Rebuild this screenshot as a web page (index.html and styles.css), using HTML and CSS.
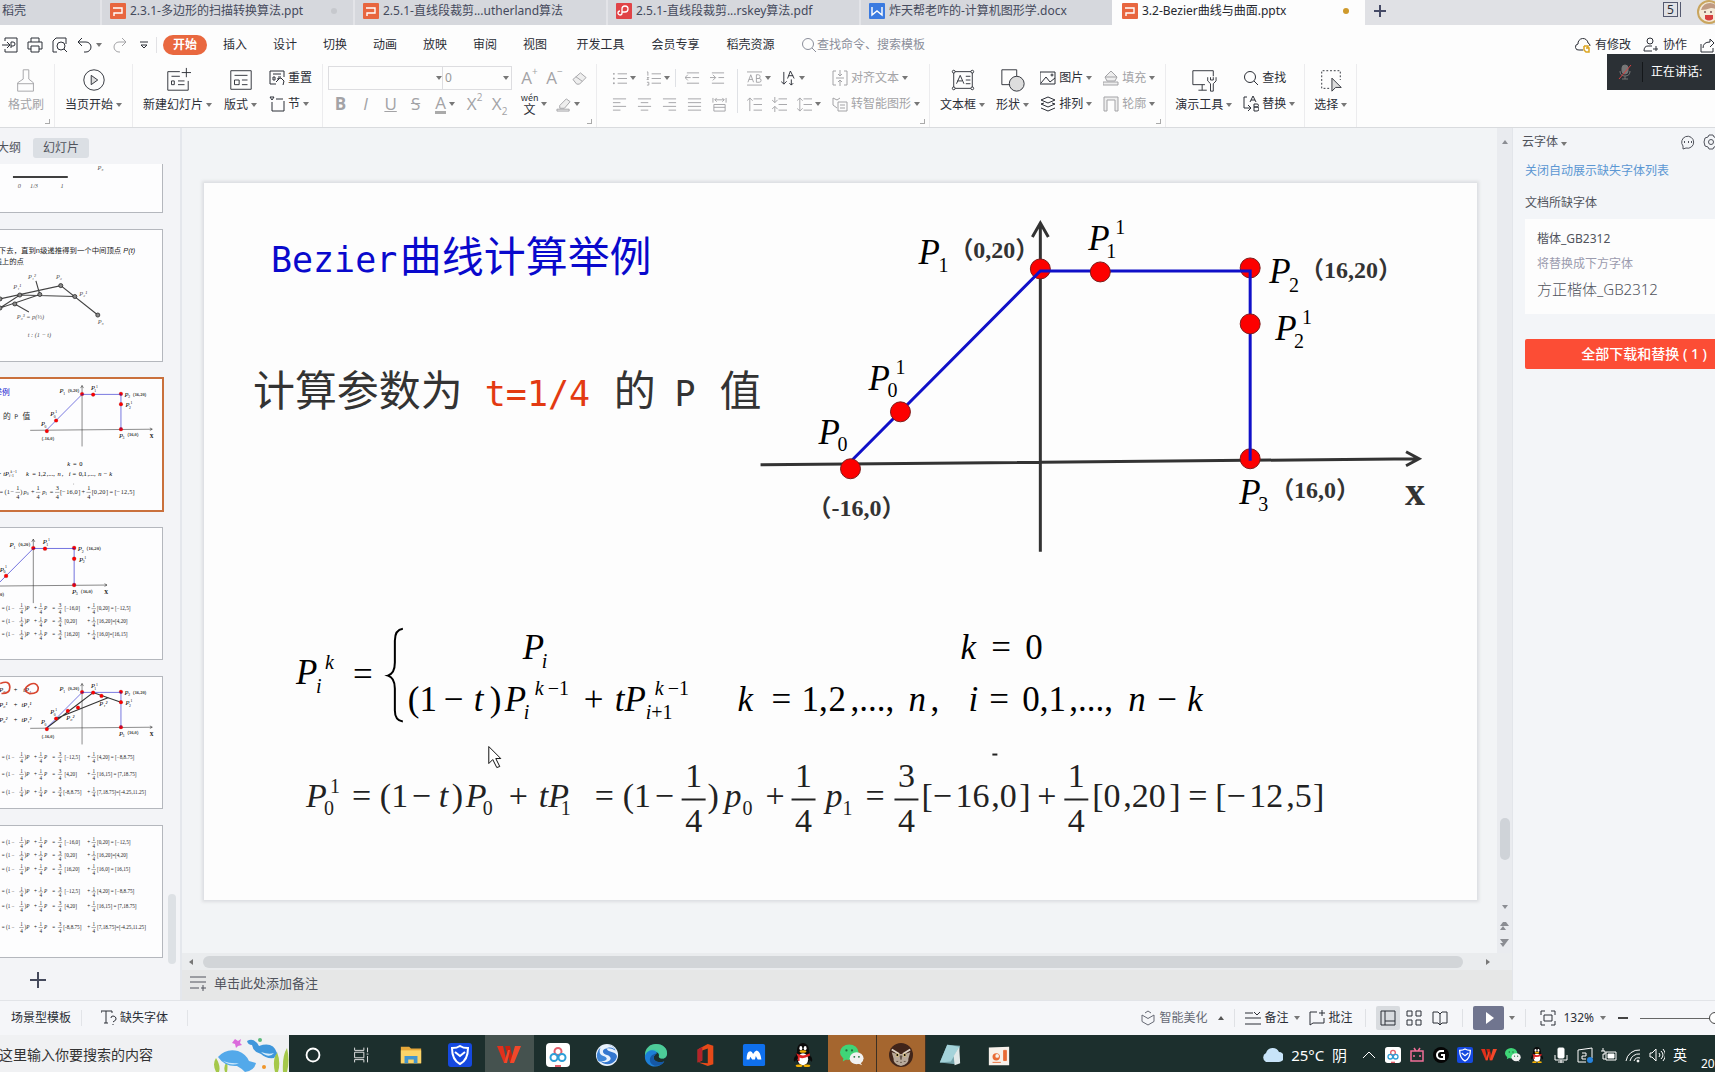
FILE: index.html
```html
<!DOCTYPE html>
<html lang="zh-CN">
<head>
  <meta charset="UTF-8" />
  <meta name="viewport" content="width=device-width, initial-scale=1.0"/>
  <title>3.2-Bezier曲线与曲面.pptx</title>
  <link rel="stylesheet" href="styles.css">
</head>
<body>
  <!-- Shared drawings -->
  <svg class="sprite" aria-hidden="true">
    <defs>
      <symbol id="ppt" viewBox="0 0 16 16"><rect width="16" height="16" rx="1" fill="#e8663f"/><path d="M3 5h9v5H4v3" fill="none" stroke="#fff" stroke-width="1.4"/></symbol>
      <symbol id="pdf" viewBox="0 0 16 16"><rect width="16" height="16" rx="1" fill="#e04347"/><path d="M6 9h3a3 3 0 1 0-3-3v4a2 2 0 1 1-2-2" fill="none" stroke="#fff" stroke-width="1.3"/></symbol>
      <symbol id="doc" viewBox="0 0 16 16"><rect width="16" height="16" rx="1" fill="#3a7ae0"/><path d="M3 4v8l5-4 5 4V4" fill="none" stroke="#fff" stroke-width="1.4"/></symbol>
      <symbol id="wechat" viewBox="0 0 26 24"><ellipse cx="10" cy="9" rx="10" ry="8.500" fill="#3fd577"/><path d="M4 14l-1 5 5-3z" fill="#3fd577"/><ellipse cx="18" cy="15.500" rx="7.500" ry="6.500" fill="#f1f1f1"/><path d="M22 20l2 3-5-2z" fill="#f1f1f1"/><g fill="#1f6e3c"><circle cx="7" cy="7" r="1.200"/><circle cx="13" cy="7" r="1.200"/><circle cx="15.500" cy="14" r="1"/><circle cx="20.500" cy="14" r="1"/></g></symbol>
      <symbol id="qq" viewBox="0 0 24 28"><path d="M3 15q-3 5-1 7l3-3zM21 15q3 5 1 7l-3-3z" fill="#0b0b0b"/><ellipse cx="12" cy="16" rx="8.500" ry="10" fill="#0b0b0b"/><ellipse cx="12" cy="8" rx="7" ry="8" fill="#0b0b0b"/><ellipse cx="12" cy="19" rx="6" ry="7" fill="#fff"/><ellipse cx="9.500" cy="6" rx="1.700" ry="2.400" fill="#fff"/><ellipse cx="14.500" cy="6" rx="1.700" ry="2.400" fill="#fff"/><ellipse cx="12" cy="10" rx="4" ry="1.500" fill="#f4b000"/><path d="M4 12q8 5 16 0v3q-8 4-12 2v4H6v-5z" fill="#e02424"/><ellipse cx="7.500" cy="26.500" rx="4" ry="1.500" fill="#f4b000"/><ellipse cx="16.500" cy="26.500" rx="4" ry="1.500" fill="#f4b000"/></symbol>
      <symbol id="disk" viewBox="0 0 24 24"><rect width="24" height="24" rx="4" fill="#fff"/><g fill="none" stroke-width="2"><circle cx="12" cy="8.500" r="3.500" stroke="#e35f6c"/><circle cx="8" cy="14.500" r="3.500" stroke="#2e9fd8"/><circle cx="16" cy="14.500" r="3.500" stroke="#2e9fd8"/></g><path d="M9 23h6" stroke="#e35f6c" stroke-width="2"/></symbol>
      <symbol id="shield" viewBox="0 0 24 24"><rect width="24" height="24" rx="3" fill="#1549e0"/><path d="M12 3c3 2 5 2 8 2 0 8-2 13-8 16C6 18 4 13 4 5c3 0 5 0 8-2z" fill="none" stroke="#fff" stroke-width="2"/><path d="M7 9l5 4 5-4" fill="none" stroke="#fff" stroke-width="2"/></symbol>
      <symbol id="wps" viewBox="0 0 24 20"><path d="M0 1h6l4 17H7z" fill="#e2301c"/><path d="M8 1h5l4 17h-4z" fill="#c9210f"/><path d="M13 5l-3 13H7l4-13zM24 1l-7 17h-4l5-17z" fill="#f1482b"/></symbol>
      <symbol id="cube" viewBox="0 0 16 16"><path d="M2 5v6.500l6 3.500 6-3.500V5M2 5l6 3.500L14 5M5 3l3-2 3 2"/></symbol>
      <symbol id="magnifier" viewBox="0 0 16 16"><circle cx="7" cy="7" r="5.500"/><path d="M11 11l4 4"/></symbol>

      <!-- coordinate system with the control polygon -->
      <g id="diagram">
        <path class="axis" d="M837 369V40M829 54l8-14 8 14M557 282L1216 276M1203 269l13 7-13 7"/>
        <g class="dot"><circle cx="837" cy="86" r="10"/><circle cx="1047" cy="85" r="10"/><circle cx="1047" cy="276" r="10"/></g>
        <path class="polygon" d="M647 279L837 88H1047V278"/>
        <g class="dot"><circle cx="897" cy="89" r="10"/><circle cx="1047" cy="141" r="10"/><circle cx="697" cy="229" r="10"/><circle cx="647" cy="286" r="10"/></g>
        <g class="math">
          <text x="715" y="81"><tspan class="v">P</tspan><tspan class="s" x="735" y="89">1</tspan></text>
          <text x="885" y="67"><tspan class="v">P</tspan><tspan class="s" x="912" y="51">1</tspan><tspan class="s" x="903" y="75">1</tspan></text>
          <text x="1066" y="100"><tspan class="v">P</tspan><tspan class="s" x="1086" y="109">2</tspan></text>
          <text x="1072" y="157"><tspan class="v">P</tspan><tspan class="s" x="1099" y="141">1</tspan><tspan class="s" x="1091" y="165">2</tspan></text>
          <text x="665" y="207"><tspan class="v">P</tspan><tspan class="s" x="692" y="191">1</tspan><tspan class="s" x="684" y="214">0</tspan></text>
          <text x="615" y="261"><tspan class="v">P</tspan><tspan class="s" x="634" y="268">0</tspan></text>
          <text x="1036" y="321"><tspan class="v">P</tspan><tspan class="s" x="1055" y="328">3</tspan></text>
        </g>
        <g class="coords">
          <text x="746" y="75">（0,20）</text>
          <text x="1097" y="95">（16,20）</text>
          <text x="604" y="333">（-16,0）</text>
          <text x="1067" y="315">（16,0）</text>
          <text class="axis-name" x="1202" y="322">x</text>
        </g>
      </g>

      <g id="quarter" class="frac"><text x="0" y="-21">1</text><text x="0" y="25">4</text><path d="M-12-8h24"/></g>
      <g id="three-quarters" class="frac"><text x="0" y="-21">3</text><text x="0" y="25">4</text><path d="M-12-8h24"/></g>
      <g id="small-quarter" class="frac"><text x="0" y="-15">1</text><text x="0" y="19">4</text><path d="M-12-9h24"/></g>
      <g id="small-three-quarters" class="frac"><text x="0" y="-15">3</text><text x="0" y="19">4</text><path d="M-12-9h24"/></g>

      <!-- the part that every step of the recursion repeats -->
      <g id="step">
        <text x="404" y="0">= (1 −</text><use href="#small-quarter" x="510"/><text x="526" y="0">)<tspan class="v">P</tspan></text>
        <text x="577" y="0">+</text><use href="#small-quarter" x="614"/><text x="632" y="0"><tspan class="v">P</tspan></text>
        <text x="676" y="0">=</text><use href="#small-three-quarters" x="718"/><text x="865" y="0">+</text><use href="#small-quarter" x="900"/>
      </g>

      <g id="slide">
        <text class="hei title" x="67" y="89"><tspan class="latin">Bezier</tspan><tspan x="196">曲线计算举例</tspan></text>
        <text class="hei" x="49" y="223">计算参数为<tspan class="latin red" x="281">t=1/4</tspan><tspan x="410">的</tspan><tspan class="latin" x="471">P</tspan><tspan x="516">值</tspan></text>
        <use href="#diagram"/>
        <g class="math">
          <text x="92" y="501"><tspan class="v">P</tspan><tspan class="s v" x="121" y="486">k</tspan><tspan class="s v" x="112" y="510">i</tspan><tspan x="149" y="503">=</tspan></text>
          <path class="brace" d="M199 446q-8 1-8 12v22q0 11-7 13q7 2 7 13v22q0 10 8 11"/>
          <text x="319" y="476"><tspan class="v">P</tspan><tspan class="s v" x="338" y="485">i</tspan></text>
          <text x="757" y="476"><tspan class="v">k</tspan><tspan x="788">=</tspan><tspan x="822">0</tspan></text>
          <text x="204" y="528">(1<tspan x="240">−</tspan><tspan class="v" x="270">t</tspan><tspan x="286">)</tspan><tspan class="v" x="301">P</tspan><tspan class="s v" x="331" y="512">k</tspan><tspan class="s" x="344">−1</tspan><tspan class="s v" x="320" y="536">i</tspan></text>
          <text x="380" y="528">+<tspan class="v" x="411">tP</tspan><tspan class="s v" x="451" y="512">k</tspan><tspan class="s" x="464">−1</tspan><tspan class="s v" x="442" y="536">i</tspan><tspan class="s">+1</tspan></text>
          <text x="534" y="528"><tspan class="v">k</tspan><tspan x="568">=</tspan><tspan x="598">1,</tspan><tspan x="625">2</tspan><tspan x="647">,...,</tspan><tspan class="v" x="705">n</tspan><tspan x="727">,</tspan><tspan class="v" x="765">i</tspan><tspan x="786">=</tspan><tspan x="819">0,1</tspan><tspan x="866">,...,</tspan><tspan class="v" x="925">n</tspan><tspan x="954">−</tspan><tspan class="v" x="984">k</tspan></text>
        </g>
        <g class="result">
          <text x="102" y="625"><tspan class="v">P</tspan><tspan class="s" x="126" y="611">1</tspan><tspan class="s" x="120" y="633">0</tspan><tspan x="148" y="625">=</tspan><tspan x="176">(1</tspan><tspan x="208">−</tspan><tspan class="v" x="235">t</tspan><tspan x="248">)</tspan><tspan class="v" x="262">P</tspan><tspan class="s" x="279" y="633">0</tspan><tspan x="305" y="625">+</tspan><tspan class="v" x="335">tP</tspan><tspan class="s" x="357" y="633">1</tspan></text>
          <text x="391" y="625">=<tspan x="419">(1</tspan><tspan x="451">−</tspan><tspan x="504">)</tspan><tspan class="v" x="521">p</tspan><tspan class="s" x="539" y="633">0</tspan><tspan x="562" y="625">+</tspan><tspan class="v" x="622">p</tspan><tspan class="s" x="639" y="633">1</tspan><tspan x="662" y="625">=</tspan></text>
          <use href="#quarter" x="490" y="625"/><use href="#quarter" x="600" y="625"/><use href="#three-quarters" x="703" y="625"/><use href="#quarter" x="873" y="625"/>
          <text x="718" y="625">[−<tspan x="752">16</tspan><tspan x="788">,0</tspan><tspan x="816">]</tspan><tspan x="834">+</tspan><tspan x="889">[0</tspan><tspan x="920">,20</tspan><tspan x="966">]</tspan><tspan x="985">=</tspan><tspan x="1012">[−</tspan><tspan x="1046">12</tspan><tspan x="1083">,5</tspan><tspan x="1110">]</tspan></text>
          <path class="speck" d="M789 572h5"/>
        </g>
      </g>
    </defs>
  </svg>

  <header class="tabbar">
    <button class="tab tab-home">稻壳</button>
    <button class="tab"><svg class="file"><use href="#ppt"/></svg>2.3.1-多边形的扫描转换算法.ppt<i class="unsaved"></i></button>
    <button class="tab"><svg class="file"><use href="#ppt"/></svg>2.5.1-直线段裁剪...utherland算法</button>
    <button class="tab"><svg class="file"><use href="#pdf"/></svg>2.5.1-直线段裁剪...rskey算法.pdf</button>
    <button class="tab"><svg class="file"><use href="#doc"/></svg>炸天帮老咋的-计算机图形学.docx</button>
    <button class="tab active"><svg class="file"><use href="#ppt"/></svg>3.2-Bezier曲线与曲面.pptx<i class="unsaved"></i></button>
    <button class="new-tab" aria-label="新建"><svg class="icon" viewBox="0 0 16 16"><path d="M8 2v12M2 8h12" stroke-width="2"/></svg></button>
    <span class="count">5</span>
    <svg class="avatar" viewBox="0 0 24 24"><circle cx="12" cy="12" r="11" fill="#f4ead8" stroke="#c9a55e" stroke-width="2"/><path d="M4 10q2-7 9-7t8 8q-3-3-7-3-5 2-10 2z" fill="#c09b83"/><circle cx="8" cy="12" r="1" fill="#755"/><circle cx="14" cy="12" r="1" fill="#755"/><path d="M8 15h8v4q-4 3-8 0z" fill="#d84040"/></svg>
  </header>

  <nav class="menu">
    <div class="quick">
      <button aria-label="输出为PDF"><svg class="icon" viewBox="0 0 16 16"><path d="M3 4V1h12v14H3v-3M0 8h7M5 5l3 3-3 3M9 11V5h2a2 2 0 0 1 0 4H9"/></svg></button>
      <button aria-label="打印"><svg class="icon" viewBox="0 0 16 16"><path d="M4 5V1h8v4M4 12H1V5h14v7h-3M4 9h8v6H4z"/></svg></button>
      <button aria-label="打印预览"><svg class="icon" viewBox="0 0 16 16"><path d="M5 15H1V4l3-3h10v6"/><circle cx="9" cy="9" r="4"/><path d="M12 12l3 3"/></svg></button>
      <button class="drop" aria-label="撤销"><svg class="icon" viewBox="0 0 16 16"><path d="M5 1L1 5l4 4M1 5h8a5 5 0 0 1 0 10H7"/></svg><i class="caret"></i></button>
      <button class="dim redo" aria-label="恢复"><svg class="icon" viewBox="0 0 16 16"><path d="M11 1l4 4-4 4M15 5H8a5 5 0 0 0 0 10h1"/></svg></button>
      <button aria-label="自定义"><svg class="icon" viewBox="0 0 16 16"><path d="M4 5h8M5 8l3 3 3-3z"/></svg></button>
    </div>
    <button class="menu-item current">开始</button>
    <button class="menu-item">插入</button>
    <button class="menu-item">设计</button>
    <button class="menu-item">切换</button>
    <button class="menu-item">动画</button>
    <button class="menu-item">放映</button>
    <button class="menu-item">审阅</button>
    <button class="menu-item">视图</button>
    <button class="menu-item wide">开发工具</button>
    <button class="menu-item wide">会员专享</button>
    <button class="menu-item wide">稻壳资源</button>
    <label class="search"><svg class="icon"><use href="#magnifier"/></svg><input type="text" placeholder="查找命令、搜索模板"></label>
    <div class="account">
      <button><svg class="icon" viewBox="0 0 16 16"><path d="M8 13H4a3 3 0 0 1-1-6 5 5 0 0 1 10-1 3 3 0 0 1 2 3"/><path d="M9 9h4v2M9 9v4l2 2h3v-4h-3" stroke="#dba520" stroke-width="1.500"/></svg>有修改</button>
      <button><svg class="icon" viewBox="0 0 16 16"><circle cx="7" cy="4" r="3"/><path d="M9 9H5q-4 0-4 5h8M10 12h5M13 9v5"/></svg>协作</button>
      <button aria-label="分享"><svg class="icon" viewBox="0 0 16 16"><path d="M2 7v8h12v-4M4 11q0-6 7-6V2l4 4-4 4"/></svg></button>
    </div>
  </nav>

  <div class="ribbon">
    <div class="group first">
      <button class="big dim"><svg class="icon" viewBox="0 0 28 28"><path d="M11 3h6v10l5 4v9H5v-9l6-4zM5 18h17"/></svg><span>格式刷</span></button>
      <i class="corner"></i>
    </div>
    <div class="group">
      <button class="big"><svg class="icon" viewBox="0 0 28 28"><circle cx="14" cy="14" r="11"/><path d="M11 9v10l7-5z" fill="#ddd"/></svg><span>当页开始<i class="caret"></i></span></button>
    </div>
    <div class="group">
      <button class="big"><svg class="icon" viewBox="0 0 28 28"><path d="M16 5H3v20h22V15M23 1v10M18 6h10M7 10h9M7 15h3v4H7zM14 15h7M14 19h7"/></svg><span>新建幻灯片<i class="caret"></i></span></button>
      <button class="big"><svg class="icon" viewBox="0 0 28 28"><path d="M3 4h22v20H3zM7 9h14M7 14h5v5H7zM15 14h6M15 19h6"/></svg><span>版式<i class="caret"></i></span></button>
      <div class="stack">
        <button class="small"><svg class="icon" viewBox="0 0 16 16"><path d="M7 14H1V1h14v6M4 4h8M4 7h2v3H4zM9 7h3M7 12l3-3M8 9l4-1 3 3-1 4"/></svg>重置</button>
        <button class="small"><svg class="icon" viewBox="0 0 16 16"><path d="M1 1h4L3 4zM7 3h7M3 6v9h12V5"/></svg>节<i class="caret"></i></button>
      </div>
    </div>
    <div class="group font-group">
      <div class="row">
        <div class="fields"><label><select class="font-name" aria-label="字体"><option></option></select><i class="caret"></i></label><label><select class="font-size" aria-label="字号"><option>0</option></select><i class="caret"></i></label></div>
        <button class="tool dim">A<sup>+</sup></button>
        <button class="tool dim">A<sup>−</sup></button>
        <button class="tool dim" aria-label="清除格式"><svg class="icon" viewBox="0 0 16 16"><path d="M1 9l8-7 6 5-7 7H5zM4 6l7 5" fill="#eee"/></svg></button>
      </div>
      <div class="row">
        <button class="tool dim"><b>B</b></button>
        <button class="tool dim"><em>I</em></button>
        <button class="tool dim"><u>U</u></button>
        <button class="tool dim"><s>S</s></button>
        <button class="tool dim drop"><span class="colored">A</span><i class="caret"></i></button>
        <button class="tool dim">X<sup>2</sup></button>
        <button class="tool dim">X<sub>2</sub></button>
        <button class="tool drop pinyin"><span><small>wén</small>文</span><i class="caret"></i></button>
        <button class="tool dim drop" aria-label="突出显示"><svg class="icon" viewBox="0 0 16 16"><path d="M4 9l7-7 4 3-6 7H4zM1 13h13v2H1z" fill="#eee"/></svg><i class="caret"></i></button>
      </div>
      <i class="corner"></i>
    </div>
    <div class="group para-group">
      <div class="stack">
        <div class="row">
          <button class="tool dim drop" aria-label="项目符号"><svg class="icon" viewBox="0 0 16 16"><path d="M6 3h10M6 8h10M6 13h10"/><g fill="currentColor" stroke="none"><circle cx="2" cy="3" r="1"/><circle cx="2" cy="8" r="1"/><circle cx="2" cy="13" r="1"/></g></svg><i class="caret"></i></button>
          <button class="tool dim drop" aria-label="编号"><svg class="icon" viewBox="0 0 16 16"><path d="M6 3h10M6 8h10M6 13h10M1 1h1v4M1 7h2l-2 2h2M1 12h2v3H1"/></svg><i class="caret"></i></button>
          <i class="rule"></i>
          <button class="tool dim" aria-label="减少缩进"><svg class="icon" viewBox="0 0 16 16"><path d="M2 2h13M8 7h7M2 13h13M6 7H0M3 4L0 7l3 3"/></svg></button>
          <button class="tool dim" aria-label="增加缩进"><svg class="icon" viewBox="0 0 16 16"><path d="M2 2h13M9 7h6M2 13h13M0 7h6M3 4l3 3-3 3"/></svg></button>
        </div>
        <div class="row">
          <button class="tool dim" aria-label="左对齐"><svg class="icon" viewBox="0 0 16 16"><path d="M1 2h14M1 6h8M1 10h14M1 14h8"/></svg></button>
          <button class="tool dim" aria-label="居中"><svg class="icon" viewBox="0 0 16 16"><path d="M1 2h14M4 6h8M1 10h14M4 14h8"/></svg></button>
          <button class="tool dim" aria-label="右对齐"><svg class="icon" viewBox="0 0 16 16"><path d="M1 2h14M7 6h8M1 10h14M7 14h8"/></svg></button>
          <button class="tool dim" aria-label="两端对齐"><svg class="icon" viewBox="0 0 16 16"><path d="M1 2h14M1 6h14M1 10h14M1 14h14"/></svg></button>
          <button class="tool dim" aria-label="分散对齐"><svg class="icon" viewBox="0 0 16 16"><path d="M1 1v5M15 1v5M3 3h10M5 1L3 3l2 2M11 1l2 2-2 2M2 8h12v7H2zM2 11h12"/></svg></button>
        </div>
      </div>
      <i class="rule tall"></i>
      <div class="stack">
        <div class="row">
          <button class="tool dim drop" aria-label="文字方向"><svg class="icon" viewBox="0 0 16 16"><path d="M0 1h16M0 15h16M1 12l3-8 3 8M2 9h4M10 4v8h3a2 2 0 0 0 0-4h-3 2a2 2 0 0 0 0-4z"/></svg><i class="caret"></i></button>
          <button class="tool drop" aria-label="文字排列"><svg class="icon" viewBox="0 0 16 16"><path d="M3 1v13M0 11l3 3 3-3M7 8l3-8 4 8M8 5h5M11 9v6M9 13l2 2 2-2"/></svg><i class="caret"></i></button>
        </div>
        <div class="row">
          <button class="tool dim" aria-label="增大行距"><svg class="icon" viewBox="0 0 16 16"><path d="M7 2h9M7 8h9M7 14h9M3 1v14M0 4l3-3 3 3"/></svg></button>
          <button class="tool dim" aria-label="减小行距"><svg class="icon" viewBox="0 0 16 16"><path d="M7 2h9M7 8h9M7 14h9M3 0v6M3 10v6M0 3l3 3 3-3M0 13l3-3 3 3"/></svg></button>
          <button class="tool dim drop" aria-label="行距"><svg class="icon" viewBox="0 0 16 16"><path d="M7 2h9M7 8h9M7 14h9M3 1v14M0 4l3-3 3 3M0 12l3 3 3-3"/></svg><i class="caret"></i></button>
        </div>
      </div>
      <div class="stack text-stack">
        <button class="small dim"><svg class="icon" viewBox="0 0 16 16"><path d="M4 1H1v14h3M12 1h3v14h-3M4 8h8M8 0v6M6 4l2 2 2-2M8 16v-6M6 12l2-2 2 2"/></svg>对齐文本<i class="caret"></i></button>
        <button class="small dim"><svg class="icon" viewBox="0 0 16 16"><path d="M5 12L1 9V2l4 2 3-2M6 6h9v9H6zM8 9h5M8 12h5"/></svg>转智能图形<i class="caret"></i></button>
      </div>
      <i class="corner"></i>
    </div>
    <div class="group draw-group">
      <button class="big"><svg class="icon" viewBox="0 0 28 28"><path d="M4 5h20v18H4zM7 18l4-9 4 9M8 15h5M17 10h5M17 14h5M17 18h5"/><g fill="#fff"><circle cx="4" cy="5" r="1.500"/><circle cx="24" cy="5" r="1.500"/><circle cx="4" cy="23" r="1.500"/><circle cx="24" cy="23" r="1.500"/></g></svg><span>文本框<i class="caret"></i></span></button>
      <button class="big"><svg class="icon" viewBox="0 0 28 28"><path d="M2 3h16v16H2z"/><circle cx="18" cy="18" r="8" fill="#ddd"/></svg><span>形状<i class="caret"></i></span></button>
      <div class="stack">
        <button class="small"><svg class="icon" viewBox="0 0 16 16"><path d="M0 2h15v12H0zM1 13l5-6 4 5 5-4"/><circle cx="12" cy="5" r="1"/></svg>图片<i class="caret"></i></button>
        <button class="small"><svg class="icon" viewBox="0 0 16 16"><path d="M8 1l7 3-7 3-7-3zM1 8l7 3 7-3M1 12l7 3 7-3M1 8l3-1M15 8l-3-1"/></svg>排列<i class="caret"></i></button>
      </div>
      <div class="stack">
        <button class="small dim"><svg class="icon" viewBox="0 0 16 16"><path d="M2 7l6-6 6 6-2 4H4zM2 7h12M0 12h15v3H0z" fill="#eee"/></svg>填充<i class="caret"></i></button>
        <button class="small dim"><svg class="icon" viewBox="0 0 16 16"><path d="M1 15V1h14v14h-3V4H4v11z" fill="#eee"/></svg>轮廓<i class="caret"></i></button>
      </div>
      <i class="corner"></i>
    </div>
    <div class="group tight">
      <button class="big"><svg class="icon" viewBox="0 0 28 28"><path d="M15 19H2V4h22v6M8 25h9M12 19v6M18 11v4l3 3v8h3v-8l3-3v-4M21 11v3h3v-3"/></svg><span>演示工具<i class="caret"></i></span></button>
      <div class="stack">
        <button class="small"><svg class="icon"><use href="#magnifier"/></svg>查找</button>
        <button class="small"><svg class="icon" viewBox="0 0 16 16"><path d="M4 1H1v11h6M5 9l3 3-3 3M7 6l3-6 3 6M8 4h4M11 8v7h3a2 2 0 0 0 0-4h-3 3a1 1 0 0 0 0-3z"/></svg>替换<i class="caret"></i></button>
      </div>
    </div>
    <div class="group tight">
      <button class="big"><svg class="icon" viewBox="0 0 28 28"><path d="M12 23H4V4h20v10" stroke-dasharray="2 2"/><path d="M15 12v14l4-4h6z" fill="#ddd"/></svg><span>选择<i class="caret"></i></span></button>
    </div>
  </div>

  <div class="speaking">
    <svg class="icon" viewBox="0 0 16 16"><rect x="5" y="1" width="6" height="9" rx="3" fill="#777" stroke="#777"/><path d="M3 7q0 5 5 5t5-5M8 12v3M5 15h6" stroke="#777"/><path d="M2 15L14 1" stroke="#d54040"/></svg>
    <span>正在讲话:</span>
  </div>

  <main class="workspace">
    <aside class="outline">
      <div class="outline-tabs"><button>大纲</button><button class="on">幻灯片</button></div>
      <div class="thumbs">
        <svg class="thumb" viewBox="0 0 1274 717">
          <path d="M464 523h296" stroke="#000" stroke-width="8"/>
          <g class="note"><text x="490" y="580">0</text><text x="556" y="580">1/3</text><text x="720" y="580">1</text><text x="920" y="486">P₃</text></g>
        </svg>
        <svg class="thumb" viewBox="0 0 1274 717">
          <g class="lead"><text x="388" y="129">下去，直到n级递推得到一个中间顶点 <tspan class="v">P(t)</tspan></text><text x="364" y="189">线上的点</text></g>
          <g fill="none" stroke="#444" stroke-width="6"><path d="M394 377L722 305 922 464M394 426L501 356 798 364M394 426L609 353M588 280L609 353M474 404L550 447"/></g>
          <g fill="#888" stroke="#222" stroke-width="4"><circle cx="394" cy="377" r="11"/><circle cx="394" cy="426" r="11"/><circle cx="501" cy="356" r="11"/><circle cx="609" cy="353" r="11"/><circle cx="474" cy="404" r="11"/><circle cx="722" cy="305" r="11"/><circle cx="798" cy="364" r="11"/><circle cx="922" cy="464" r="11"/></g>
          <g class="note"><text x="545" y="268">P₁²</text><text x="696" y="268">P₂</text><text x="466" y="322">P₁¹</text><text x="822" y="362">P₂¹</text><text x="922" y="515">P₃</text><text x="485" y="488">P₀³ = p(⅓)</text><text x="544" y="584">t : (1 − t)</text></g>
        </svg>
        <svg class="thumb selected" viewBox="0 0 1274 717"><use href="#slide"/></svg>
        <svg class="thumb" viewBox="0 0 1274 717">
          <use href="#diagram" transform="translate(-305 23) scale(1.05)"/>
          <g class="result compact">
            <use href="#step" y="449"/><text x="742" y="449">[−16,0]</text><text x="918" y="449">[0,20] = [−12,5]</text>
            <use href="#step" y="520"/><text x="742" y="520">[0,20]</text><text x="918" y="520">[16,20]=[4,20]</text>
            <use href="#step" y="590"/><text x="742" y="590">[16,20]</text><text x="918" y="590">[16,0]=[16,15]</text>
          </g>
        </svg>
        <svg class="thumb" viewBox="0 0 1274 717">
          <path d="M647 279L897 89 1047 141M697 229L980 115" fill="none" stroke="#333" stroke-width="6"/>
          <use href="#diagram"/>
          <g class="dot"><circle cx="760" cy="188" r="10"/><circle cx="942" cy="107" r="10"/><circle cx="815" cy="170" r="10"/></g>
          <g class="math"><text x="390" y="85"><tspan class="v">P₀</tspan></text><text x="468" y="85">+</text><text x="520" y="85"><tspan class="v">tP₁</tspan></text><text x="390" y="165"><tspan class="v">P₀¹</tspan></text><text x="468" y="165">+</text><text x="510" y="165"><tspan class="v">tP₁¹</tspan></text><text x="390" y="250"><tspan class="v">P₀²</tspan></text><text x="468" y="250">+</text><text x="510" y="250"><tspan class="v">tP₁²</tspan></text><text x="752" y="235"><tspan class="v">P₀²</tspan></text><text x="930" y="160"><tspan class="v">P₁²</tspan></text></g>
          <path d="M395 40q50-20 52 18t-45 36M555 45q-50 30 0 50 50 0 45-35-10-30-45-15" fill="none" stroke="#d8452f" stroke-width="9"/>
          <g class="result compact">
            <use href="#step" y="448"/><text x="742" y="448">[−12,5]</text><text x="918" y="448">[4,20] = [−8,8.75]</text>
            <use href="#step" y="540"/><text x="742" y="540">[4,20]</text><text x="918" y="540">[16,15] = [7,18.75]</text>
            <use href="#step" y="636"/><text x="736" y="636">[-8,8.75]</text><text x="918" y="636">[7,18.75]=[-4.25,11.25]</text>
          </g>
        </svg>
        <svg class="thumb" viewBox="0 0 1274 717">
          <g class="result compact">
            <use href="#step" y="103"/><text x="742" y="103">[−16,0]</text><text x="918" y="103">[0,20] = [−12,5]</text>
            <use href="#step" y="174"/><text x="742" y="174">[0,20]</text><text x="918" y="174">[16,20]=[4,20]</text>
            <use href="#step" y="249"/><text x="742" y="249">[16,20]</text><text x="918" y="249">[16,0] = [16,15]</text>
            <use href="#step" y="369"/><text x="742" y="369">[−12,5]</text><text x="918" y="369">[4,20] = [−8,8.75]</text>
            <use href="#step" y="449"/><text x="742" y="449">[4,20]</text><text x="918" y="449">[16,15] = [7,18.75]</text>
            <use href="#step" y="562"/><text x="736" y="562">[-8,8.75]</text><text x="918" y="562">[7,18.75]=[-4.25,11.25]</text>
          </g>
        </svg>
      </div>
      <button class="add-slide" aria-label="新建幻灯片"><svg class="icon" viewBox="0 0 16 16"><path d="M8 0v16M0 8h16" stroke-width="2"/></svg></button>
      <i class="outline-scroll"></i>
    </aside>

    <section class="editor">
      <div class="stage">
        <div class="canvas">
          <svg class="page" viewBox="0 0 1274 717">
            <use href="#slide"/>
            <path d="M285 564v17l4-4 4 8 3-1-4-8h5z" fill="#fff" stroke="#111"/>
          </svg>
        </div>
        <div class="vscroll"><i class="up"></i><i class="vthumb"></i><i class="down"></i><i class="up double"></i><i class="down double"></i></div>
      </div>
      <div class="hscroll"><i class="left"></i><i class="hthumb"></i><i class="right"></i></div>
      <label class="notes"><svg class="icon" viewBox="0 0 16 16"><path d="M0 2h16M0 7h16M0 13h9M11 13h5M13 10v6"/></svg><input type="text" placeholder="单击此处添加备注"></label>
    </section>

    <aside class="fonts">
      <div class="fonts-head"><button>云字体<i class="caret"></i></button><span class="fonts-tools"><svg class="icon" viewBox="0 0 16 16"><path d="M3 15v-3a6 6 0 1 1 3 2z"/><path d="M4 8h1M8 8h1M11 8h1" stroke-width="2"/></svg><svg class="icon" viewBox="0 0 16 16"><path d="M6 1h4l1 2 3 1 1 4-1 4-3 1-1 2H6l-1-2-3-1-1-4 1-4 3-1z"/><circle cx="8" cy="8" r="2.500"/></svg></span></div>
      <a href="#">关闭自动展示缺失字体列表</a>
      <h2>文档所缺字体</h2>
      <div class="card">
        <p>楷体_GB2312</p>
        <p class="hint">将替换成下方字体</p>
        <p class="kai">方正楷体_GB2312</p>
      </div>
      <button class="download">全部下载和替换 ( 1 )</button>
    </aside>
  </main>

  <footer class="status">
    <span class="template">场景型模板</span>
    <button class="missing"><svg class="icon" viewBox="0 0 16 16"><path d="M0 3V1h11v2M5 1v12M3 13h4M10 8q0-2 2-2t3 2-3 4M12 14v1"/></svg>缺失字体</button>
    <div class="status-right">
      <button class="beauty"><svg class="icon"><use href="#cube"/></svg>智能美化<i class="caret flip"></i></button>
      <i class="rule"></i>
      <button class="note-btn"><svg class="icon" viewBox="0 0 16 16"><path d="M0 3h8M0 8h16M0 14h16M9 2l3 3 3-3"/></svg>备注<i class="caret"></i></button>
      <button class="comment"><svg class="icon" viewBox="0 0 16 16"><path d="M8 2H1v13l3-2h11V8M13 0v6M10 3h6"/></svg>批注</button>
      <i class="rule"></i>
      <button class="view on" aria-label="普通视图"><svg class="icon" viewBox="0 0 16 16"><path d="M1 1h14v14H1zM5 1v14M5 11h10"/></svg></button>
      <button class="view" aria-label="幻灯片浏览"><svg class="icon" viewBox="0 0 16 16"><path d="M1 1h5v5H1zM10 1h5v5h-5zM1 10h5v5H1zM10 10h5v5h-5z"/></svg></button>
      <button class="view" aria-label="阅读视图"><svg class="icon" viewBox="0 0 16 16"><path d="M1 2h5l2 2 2-2h5v11h-5l-2 2-2-2H1zM8 4v11"/></svg></button>
      <i class="rule"></i>
      <button class="play" aria-label="放映"><svg viewBox="0 0 16 16"><path d="M5 2v12l8-6z" fill="#fff"/></svg></button><i class="caret"></i>
      <i class="rule"></i>
      <button class="zoom"><svg class="icon" viewBox="0 0 16 16"><path d="M1 5V1h4M11 1h4v4M15 11v4h-4M5 15H1v-4M4 5h8v6H4z"/></svg>132%<i class="caret"></i></button>
      <button class="minus" aria-label="缩小"></button>
      <span class="slider"><input type="range" aria-label="缩放" value="50"></span>
    </div>
  </footer>

  <footer class="taskbar">
    <label class="find"><input type="text" placeholder="在这里输入你要搜索的内容">
      <svg class="dolphins" viewBox="0 0 76 37"><path d="M3 37q-4-8 0-14 5 8 3 14zM12 37q-2-6 2-10 1 5 0 10zM62 37q-3-12 2-20 4 10 1 20zM70 37q-1-16 4-24 3 12 0 24z" fill="#a5c84a"/><path d="M5 22q8-9 20-6 8 3 11 10l7 2q-2 8-11 9-4-4-8-6-12 1-19-9z" fill="#53a9ea"/><path d="M10 26q8 3 16 2-7 4-16-2z" fill="#cfe9fb"/><path d="M34 6q7-4 12 5 14-5 18 7l-3 5q-8 1-13-4-8-2-9-9-4 0-5-4z" fill="#3f97dc"/><path d="M48 17q8 3 13 1-5 6-13-1z" fill="#d6edfb"/><path d="M22 4l3 2 3-2-1 4 2 2-4 1-2 2-1-4-3-1z" fill="#db6bdc"/><circle cx="47" cy="5" r="2" fill="#5cba7d"/><circle cx="51" cy="32" r="2" fill="#f0962b"/></svg>
    </label>
    <button class="app" aria-label="Cortana"><svg viewBox="0 0 26 26"><circle cx="13" cy="13" r="7" fill="none" stroke="#fff" stroke-width="2"/></svg></button>
    <button class="app" aria-label="任务视图"><svg viewBox="0 0 26 26"><path d="M5 5v3h10V5M5 21v-3h10v3M5 10h10v6H5zM19 5v5M19 14v7M18 12h2" fill="none" stroke="#eee"/></svg></button>
    <button class="app" aria-label="资源管理器"><svg viewBox="0 0 26 26"><path d="M2 4h9l2 2h11v16H2z" fill="#e7a83a"/><path d="M2 8h22v14H2z" fill="#fcd468"/><path d="M6 22v-8h14v8h-4v-4h-6v4z" fill="#4396cf"/></svg></button>
    <button class="app" aria-label="安全卫士"><svg><use href="#shield"/></svg></button>
    <button class="app running" aria-label="WPS"><svg><use href="#wps"/></svg></button>
    <button class="app" aria-label="网盘"><svg><use href="#disk"/></svg></button>
    <button class="app" aria-label="浏览器"><svg viewBox="0 0 26 26"><circle cx="13" cy="13" r="12" fill="#e9f2fc"/><path d="M13 2a11 11 0 0 1 9 6q-5-3-10-2c-6 2-3 6 1 7s6 5 1 7q-5 2-9-1a11 11 0 0 0 17 0c6-9-5-9-8-11q-3-3 2-3 5 0 7 5A11 11 0 0 0 13 2z" fill="#3477cf"/><path d="M4 20a11 11 0 0 1 2-15q-3 7 3 9c6 2 5 6-5 6z" fill="#3f86d8"/></svg></button>
    <button class="app" aria-label="Edge"><svg viewBox="0 0 26 26"><path d="M1 14C1 5 7 1 13 1c8 0 12 5 12 10 0 7-8 7-9 4 2-6-8-8-11 0z" fill="#38c5b1"/><path d="M13 1c8 0 12 5 12 10 0 7-8 7-9 4 3-3 1-8-6-8-5 0-8 3-9 7C1 5 7 1 13 1z" fill="#5cd187" opacity=".6"/><path d="M1 14c3-8 12-7 13-3-7 4-3 12 8 9-7 10-22 5-21-6z" fill="#1d7fd7"/><path d="M14 11c-7 4-3 12 8 9-4 6-12 6-15 1-2-5 1-9 7-10z" fill="#1558a6"/></svg></button>
    <button class="app" aria-label="Office"><svg viewBox="0 0 26 26"><path d="M5 7l11-6 6 2v20l-6 2-10-4 10 1V6l-6 2v11l-5 2z" fill="#e64a19"/><path d="M5 7l5-3v15l-5 2z" fill="#b4232b"/></svg></button>
    <button class="app" aria-label="会议"><svg viewBox="0 0 26 26"><rect x="1" y="1" width="24" height="24" rx="2" fill="#0f70ed"/><path d="M5 18q0-9 4-9 2 0 3 3 2-4 4-4 4 1 5 10h-4l-2-4-1 4h-3l-2-3-1 3z" fill="#fff"/></svg></button>
    <button class="app" aria-label="QQ"><svg><use href="#qq"/></svg></button>
    <button class="app alert" aria-label="微信"><svg><use href="#wechat"/></svg></button>
    <button class="app alert" aria-label="猫头鹰"><svg viewBox="0 0 26 26"><circle cx="13" cy="13" r="13" fill="#41251a"/><path d="M3 10q10 4 20 0l-2 7q1 5-8 8-9-3-8-8z" fill="#b8a99a"/><path d="M3 7l8 5M23 7l-8 5" stroke="#ddd2c4" stroke-width="2"/><circle cx="9" cy="13" r="2" fill="#d9bd7a"/><circle cx="17" cy="13" r="2" fill="#d9bd7a"/><circle cx="9" cy="13" r="1"/><circle cx="17" cy="13" r="1"/><path d="M12 14h2l-1 4zM8 20h2M12 21h2M16 20h2" fill="#33251c" stroke="#66574a"/></svg></button>
    <button class="app" aria-label="记事本"><svg viewBox="0 0 26 26"><path d="M10 2l14 1-5 20-17-2z" fill="#76a5ac"/><path d="M10 2l13 2-9 16-12 1z" fill="#a4d3da"/><path d="M23 4l1 18-6 2-1-10z" fill="#e0e9e9"/></svg></button>
    <button class="app" aria-label="录屏"><svg viewBox="0 0 26 26"><path d="M2 5l22-1v20H2z" fill="#f7f1eb"/><circle cx="10" cy="15" r="4" fill="#e96b35"/><circle cx="11" cy="14" r="2" fill="#f7f1eb"/><path d="M18 8h3v11h-3zM6 21h9" fill="#e96b35" stroke="#e96b35"/></svg></button>
    <div class="tray">
      <svg class="weather" viewBox="0 0 22 18"><path d="M5 16a5 5 0 0 1 0-9 7 7 0 0 1 13-1 5 5 0 0 1 0 10z" fill="#c8e4f9"/></svg>
      <span class="temp">25°C&nbsp; 阴</span>
      <svg class="tray-icon" viewBox="0 0 16 16"><path d="M2 11l6-6 6 6"/></svg>
      <svg class="tray-icon"><use href="#disk"/></svg>
      <svg class="tray-icon" viewBox="0 0 16 16"><path d="M2 4h12v10H2zM5 1l2 3M11 1L9 4M5 8v2M11 8v2" stroke="#ef6f98" stroke-width="1.500"/></svg>
      <svg class="tray-icon" viewBox="0 0 16 16"><circle cx="8" cy="8" r="8" fill="#050505" stroke="none"/><path d="M11 4H8a4 4 0 1 0 0 8h3V8H8" stroke-width="2"/></svg>
      <svg class="tray-icon"><use href="#shield"/></svg>
      <svg class="tray-icon"><use href="#wps"/></svg>
      <svg class="tray-icon"><use href="#wechat"/></svg>
      <svg class="tray-icon"><use href="#qq"/></svg>
      <svg class="tray-icon" viewBox="0 0 16 16"><rect x="5" y="1" width="6" height="10" rx="1" fill="#fff"/><path d="M2 8v5h12V8M8 13v3M5 15h6"/></svg>
      <svg class="tray-icon" viewBox="0 0 16 16"><path d="M1 3l14-2v10M1 3v12h8M5 6h4v3H5v3h4"/><circle cx="13" cy="13" r="3" fill="#2784df" stroke="none"/></svg>
      <svg class="tray-icon" viewBox="0 0 16 16"><path d="M5 5h10v8H5zM2 1v3M0 4h4v3H2v5h3"/><path d="M7 7h6v4H7z" fill="#fff"/></svg>
      <svg class="tray-icon" viewBox="0 0 16 16"><path d="M1 14A13 13 0 0 1 15 3M5 14A9 9 0 0 1 15 7M9 14a5 5 0 0 1 6-3"/><circle cx="13" cy="14" r="1" fill="#fff"/></svg>
      <svg class="tray-icon" viewBox="0 0 16 16"><path d="M1 6h2l4-4v12l-4-4H1zM10 6q2 2 0 4M12 4q4 4 0 8M14 2q5 6 0 12"/></svg>
      <span class="lang">英</span>
      <span class="clock">2021</span>
    </div>
  </footer>
</body>
</html>
```
FILE: styles.css
```css
* {
  box-sizing: border-box;
}

body {
  margin: 0;
  height: 100vh;
  display: flex;
  flex-direction: column;
  overflow: hidden;
  font: 12px/16px "Noto Sans", "Noto Sans CJK SC", sans-serif;
  color: #2b2e36;
  background: #fdfdfd;
}

button, input, select {
  font: inherit;
  color: inherit;
  padding: 0;
  border: 0;
  background: none;
  white-space: nowrap;
}

input:focus {
  outline: none;
}

svg {
  display: block;
  flex: none;
}

.sprite {
  position: absolute;
  width: 0;
  height: 0;
}

.icon {
  width: 16px;
  height: 16px;
  fill: none;
  stroke: currentColor;
}

.caret {
  display: inline-block;
  flex: none;
  border: 3px solid transparent;
  border-top: 4px solid #777;
  border-bottom: 0;
  margin-left: 3px;
}

.caret.flip {
  border-top: 0;
  border-bottom: 4px solid #555;
}

.dim {
  color: #a3a3a6;
}

.rule {
  width: 1px;
  height: 18px;
  background: #dfe1e5;
}

/* file tabs */
.tabbar {
  height: 25px;
  flex: none;
  display: flex;
  align-items: stretch;
  background: #e0e1e5;
}

.tab {
  width: 253px;
  display: flex;
  align-items: center;
  gap: 4px;
  padding: 0 8px 4px;
  background: #d6d8dd;
  border-left: 2px solid #e3e4e8;
  color: #454a5c;
}

.tab-home {
  width: 100px;
  padding-left: 2px;
  border: 0;
}

.tab.active {
  background: #fdfdfd;
  border-color: #fdfdfd;
  color: #26282f;
}

.file {
  width: 16px;
  height: 16px;
}

.unsaved {
  width: 6px;
  height: 6px;
  border-radius: 3px;
  margin: 0 8px 0 auto;
  background: #c6c8cd;
}

.active .unsaved {
  background: #cf9a2c;
}

.new-tab {
  padding: 0 7px 4px;
  color: #454a66;
}

.count {
  margin: 2px 19px 8px auto;
  width: 15px;
  line-height: 13px;
  text-align: center;
  border: 1px solid #555a70;
  box-shadow: 2px 0 0 #e0e1e5, 3px 0 0 #555a70;
}

.avatar {
  width: 24px;
  height: 24px;
  margin-right: -6px;
}

/* menu */
.menu {
  height: 39px;
  flex: none;
  display: flex;
  align-items: center;
}

.quick {
  display: flex;
  gap: 9px;
  padding: 0 4px 0 2px;
  margin-right: 6px;
  border-right: 1px solid #e2e2e5;
}

.quick .drop {
  display: flex;
  align-items: center;
}

.menu-item {
  width: 50px;
}

.menu-item.current {
  width: 44px;
  line-height: 20px;
  margin-right: 3px;
  border-radius: 10px;
  background: #e9683f;
  color: #fff;
  font-weight: bold;
}

.menu-item.wide {
  width: 75px;
}

.menu-item.wide:nth-of-type(9) {
  margin-left: 3px;
}

.search {
  display: flex;
  align-items: center;
  color: #8b8e9a;
  margin-left: 13px;
}

.search ::placeholder {
  color: #8b8e9a;
}

.account {
  margin-left: auto;
  display: flex;
  gap: 12px;
}

.account button {
  display: flex;
  align-items: center;
  gap: 4px;
}

/* ribbon */
.ribbon {
  height: 64px;
  flex: none;
  display: flex;
  border-bottom: 1px solid #d9dbde;
}

.group {
  position: relative;
  display: flex;
  gap: 12px;
  padding: 0 10px;
  border-right: 1px solid #ececee;
}

.group.first {
  padding-left: 8px;
}

.group.tight {
  padding: 0 9px;
  gap: 11px;
}

.corner {
  position: absolute;
  right: 4px;
  bottom: 3px;
  width: 5px;
  height: 5px;
  border: solid #aaa;
  border-width: 0 1px 1px 0;
}

.big {
  display: flex;
  flex-direction: column;
  align-items: center;
  justify-content: flex-start;
  gap: 3px;
}

.big .icon {
  width: 28px;
  height: 28px;
  padding: 1px;
  margin-top: 2px;
}

.big span {
  display: flex;
  align-items: center;
}

.stack {
  display: flex;
  flex-direction: column;
  gap: 2px;
  padding-top: 2px;
}

.small {
  height: 24px;
  display: flex;
  align-items: center;
  gap: 3px;
}

.small .caret {
  margin-left: 0;
}

.row {
  height: 24px;
  display: flex;
  align-items: center;
}

.font-group {
  flex-direction: column;
  gap: 2px;
  padding: 2px 4px 0 5px;
}

.fields {
  display: flex;
  height: 24px;
  width: 184px;
  border: 1px solid #dddde0;
  margin-right: 5px;
}

.fields label {
  display: flex;
  align-items: center;
  color: #999;
}

.fields label + label {
  border-left: 1px solid #dddde0;
}

.fields select {
  appearance: none;
}

.font-name {
  width: 104px;
}

.font-size {
  width: 57px;
  padding-left: 2px;
}

.tool {
  width: 25px;
  height: 24px;
  display: flex;
  align-items: center;
  justify-content: center;
  font: 17px/20px "Open Sans", "Noto Sans", sans-serif;
}

.tool.drop {
  width: 34px;
}

.tool .icon {
  width: 15px;
  height: 15px;
}

.tool sup, .tool sub {
  font-size: 10px;
  line-height: 10px;
}

.tool sup {
  align-self: flex-start;
}

.tool sub {
  align-self: flex-end;
}

.colored {
  line-height: 17px;
  border-bottom: 3px solid #aaa;
}

.tool.pinyin {
  margin-left: 5px;
}

.pinyin span {
  display: flex;
  flex-direction: column;
  align-items: center;
  font: 12px/13px "Noto Sans CJK SC", sans-serif;
}

.pinyin small {
  font-size: 9px;
  line-height: 9px;
}

.para-group {
  gap: 4px;
  padding: 0 9px 0 10px;
}

.para-group .stack:first-child {
  width: 126px;
}

.para-group .rule {
  margin: 0 4px 0 0;
}

.para-group .rule.tall {
  margin: 5px 0;
  height: 44px;
}

.text-stack {
  padding-left: 2px;
}

.draw-group {
  gap: 11px;
}

.speaking {
  position: absolute;
  top: 54px;
  right: 0;
  width: 108px;
  height: 36px;
  display: flex;
  align-items: center;
  gap: 9px;
  padding-left: 10px;
  background: #2b3035;
  color: #fff;
}

.speaking span {
  padding-left: 8px;
  border-left: 1px solid #14171a;
  line-height: 20px;
}

/* workspace */
.workspace {
  flex: 1;
  min-height: 0;
  display: flex;
  background: #f3f4f7;
}

.outline {
  position: relative;
  width: 182px;
  flex: none;
  display: flex;
  flex-direction: column;
  overflow: hidden;
  border-right: 2px solid #e4e7ec;
}

.outline-tabs {
  flex: none;
  height: 36px;
  display: flex;
  align-items: center;
  gap: 12px;
  padding-top: 4px;
  margin-left: -3px;
  color: #50535c;
}

.outline-tabs .on {
  width: 56px;
  line-height: 20px;
  border-radius: 3px;
  background: #dbdfe4;
}

.thumbs {
  flex: 1;
  min-height: 0;
  overflow: hidden;
  display: flex;
  flex-direction: column;
  justify-content: flex-end;
  align-items: flex-end;
  gap: 16px;
  padding-right: 17px;
}

.thumb {
  width: 236px;
  height: 133px;
  background: #fdfdfe;
  outline: 1px solid #b4b7bd;
  outline-offset: -1px;
}

.thumb.selected {
  outline: 2px solid #c9703c;
}

.add-slide {
  height: 42px;
  flex: none;
  padding: 2px 30px 0;
  color: #454a5c;
}

.outline-scroll {
  position: absolute;
  right: 4px;
  bottom: 36px;
  width: 8px;
  height: 70px;
  border-radius: 4px;
  background: #dde1e5;
}

.editor {
  flex: 1;
  min-width: 0;
  display: flex;
  flex-direction: column;
}

.stage {
  flex: 1;
  min-height: 0;
  display: flex;
}

.canvas {
  flex: 1;
  min-width: 0;
  padding: 2px 20px 0 22px;
  display: flex;
  align-items: center;
  background: #f2f4f6;
}

.page {
  width: 100%;
  background: #fdfdfd;
  box-shadow: 0 0 3px 2px #dcdee1;
}

.vscroll {
  width: 15px;
  display: flex;
  flex-direction: column;
  align-items: center;
  background: #e9ebef;
  padding: 12px 0 10px;
}

.up, .down {
  border: 3px solid transparent;
}

.up {
  border-bottom: 4px solid #8b8d93;
  border-top: 0;
}

.down {
  border-top: 4px solid #8b8d93;
  border-bottom: 0;
}

.vthumb {
  width: 10px;
  height: 42px;
  border-radius: 5px;
  background: #cfd3d8;
  margin: auto 0 45px;
}

.double {
  height: 4px;
  margin-top: 13px;
}

.double::after {
  content: "";
  display: block;
  width: 0;
  margin-left: -3px;
  border: 3px solid transparent;
}

.up.double::after {
  margin-top: 4px;
  border-top: 0;
  border-bottom: 4px solid #8b8d93;
}

.down.double::after {
  border-bottom: 0;
  border-top: 4px solid #8b8d93;
}

.hscroll {
  height: 17px;
  flex: none;
  display: flex;
  align-items: center;
  gap: 10px;
  padding: 0 22px 0 7px;
  background: #eaecee;
}

.left, .right {
  border: 3px solid transparent;
}

.left {
  border-right: 4px solid #777;
  border-left: 0;
}

.right {
  border-left: 4px solid #777;
  border-right: 0;
  margin-left: 13px;
}

.hthumb {
  flex: 1;
  height: 12px;
  border-radius: 6px;
  background: #d2d5d8;
}

.notes {
  height: 30px;
  flex: none;
  display: flex;
  align-items: center;
  gap: 8px;
  padding: 0 0 4px 8px;
  background: #e6e7e7;
  color: #50535c;
  font-size: 13px;
}

.notes ::placeholder {
  color: #50535c;
}

/* missing fonts */
.fonts {
  width: 203px;
  flex: none;
  padding: 6px 0 0 12px;
  background: #f3f5f8;
  border-left: 1px solid #e2e5ea;
}

.fonts-head {
  display: flex;
  justify-content: space-between;
  margin: 0 -4px 13px -3px;
  color: #50535c;
}

.fonts-tools {
  display: flex;
  gap: 7px;
}

.fonts a {
  display: block;
  color: #5b97d3;
  text-decoration: none;
}

.fonts h2 {
  margin: 16px 0 8px;
  font-size: 12px;
  font-weight: normal;
  color: #50535c;
}

.card {
  height: 95px;
  padding: 12px;
  background: #fdfdfd;
}

.card p {
  margin: 0 0 9px;
  color: #50535c;
}

.card .hint {
  color: #9b9bae;
}

.card .kai {
  font-size: 15px;
  font-weight: 300;
}

.download {
  display: block;
  width: 100%;
  height: 30px;
  margin-top: 25px;
  padding-right: 8px;
  text-align: right;
  border-radius: 2px 0 0 2px;
  background: #fc4d35;
  color: #fff;
  font-size: 14px;
  font-weight: 500;
}

/* status bar */
.status {
  height: 35px;
  flex: none;
  display: flex;
  align-items: center;
  background: #f5f6f9;
  border-top: 1px solid #e2e4e8;
}

.template {
  padding: 0 10px 0 11px;
  border-right: 1px solid #e2e4e8;
}

.missing {
  display: flex;
  gap: 3px;
  padding: 0 19px;
  border-right: 1px solid #e2e4e8;
}

.status-right {
  margin-left: auto;
  display: flex;
  align-items: center;
}

.status-right .rule {
  margin: 0 10px;
}

.status-right button {
  display: flex;
  align-items: center;
  gap: 3px;
}

.beauty {
  color: #666974;
}

.beauty .caret {
  margin-left: 8px;
}

.note-btn {
  margin-right: 9px;
}

.comment {
  margin-right: 3px;
}

.status-right .view {
  width: 24px;
  height: 24px;
  justify-content: center;
}

.view + .view {
  margin-left: 2px;
}

.view.on {
  background: #d8dbdf;
  border-radius: 2px;
}

.status-right .play {
  width: 31px;
  height: 24px;
  justify-content: center;
  border-radius: 2px;
  background: #70758f;
  margin-right: 2px;
}

.play svg {
  width: 16px;
}

.zoom .icon {
  margin: 0 4px;
}

.minus {
  width: 10px;
  height: 2px;
  background: #444;
  margin: 0 12px;
}

.slider {
  width: 75px;
  overflow: hidden;
}

.slider input {
  display: block;
  width: 150px;
  margin: 0;
  height: 16px;
  appearance: none;
  background: linear-gradient(#666, #666) center / 100% 1px no-repeat;
}

.slider input::-webkit-slider-thumb {
  appearance: none;
  width: 12px;
  height: 12px;
  border: 1px solid #444;
  border-radius: 6px;
  background: #fff;
}

/* taskbar */
.taskbar {
  height: 37px;
  flex: none;
  display: flex;
  background: #1c2f2d;
  color: #fff;
}

.find {
  width: 289px;
  flex: none;
  display: flex;
  justify-content: space-between;
  overflow: hidden;
  background: #f0f1f3;
  font-size: 14px;
}

.find input {
  width: 200px;
  margin: 3px 0 0 -15px;
}

.find ::placeholder {
  color: #333;
}

.dolphins {
  width: 76px;
  height: 37px;
}

.app {
  width: 49px;
  padding: 3px 12px 0;
}

.app svg {
  width: 24px;
  height: 24px;
}

.running {
  background: #45524f;
}

.alert {
  background: #a5662f;
  border-right: 1px solid #3c3024;
}

.tray {
  margin-left: auto;
  display: flex;
  align-items: center;
  gap: 8px;
  padding-top: 3px;
  font-size: 14px;
  white-space: nowrap;
}

.weather {
  width: 22px;
}

.temp {
  font-size: 15px;
  margin-right: 6px;
}

.tray-icon {
  width: 16px;
  height: 16px;
  fill: none;
  stroke: #fff;
}

.tray-icon use {
  stroke: none;
}

.lang {
  margin-right: 6px;
}

.clock {
  width: 14px;
  overflow: hidden;
  font-size: 12px;
  align-self: flex-end;
}

/* slide drawing */
.axis {
  fill: none;
  stroke: #333;
  stroke-width: 3;
}

.dot {
  fill: #fd0000;
  stroke: #7c1b1b;
}

.polygon {
  fill: none;
  stroke: #1010c8;
  stroke-width: 3;
}

.math {
  font: 35px "Liberation Serif", serif;
  fill: #000;
}

.result {
  font: 34px "Liberation Serif", serif;
  fill: #222;
}

.compact {
  font-size: 28px;
}

.v {
  font-style: italic;
}

.s {
  font-size: 20px;
}

.coords {
  font: bold 24px "Liberation Serif", "Noto Sans CJK SC", serif;
  fill: #333;
}

.axis-name {
  font-size: 40px;
}

.brace {
  fill: none;
  stroke: #000;
  stroke-width: 2;
}

.frac {
  text-anchor: middle;
}

.frac path, .speck {
  stroke: #222;
  stroke-width: 2;
}

.hei {
  font: 42px "Noto Sans CJK SC", sans-serif;
  fill: #333;
}

.title {
  fill: #0909cc;
}

.latin {
  font-family: "DejaVu Sans Mono", monospace;
  font-size: 35px;
}

.red {
  fill: #e33a12;
}

.note {
  font: italic 34px "Liberation Serif", serif;
  fill: #555;
}

.lead {
  font: 40px "Liberation Sans", "Noto Sans CJK SC", sans-serif;
  fill: #222;
}
```
